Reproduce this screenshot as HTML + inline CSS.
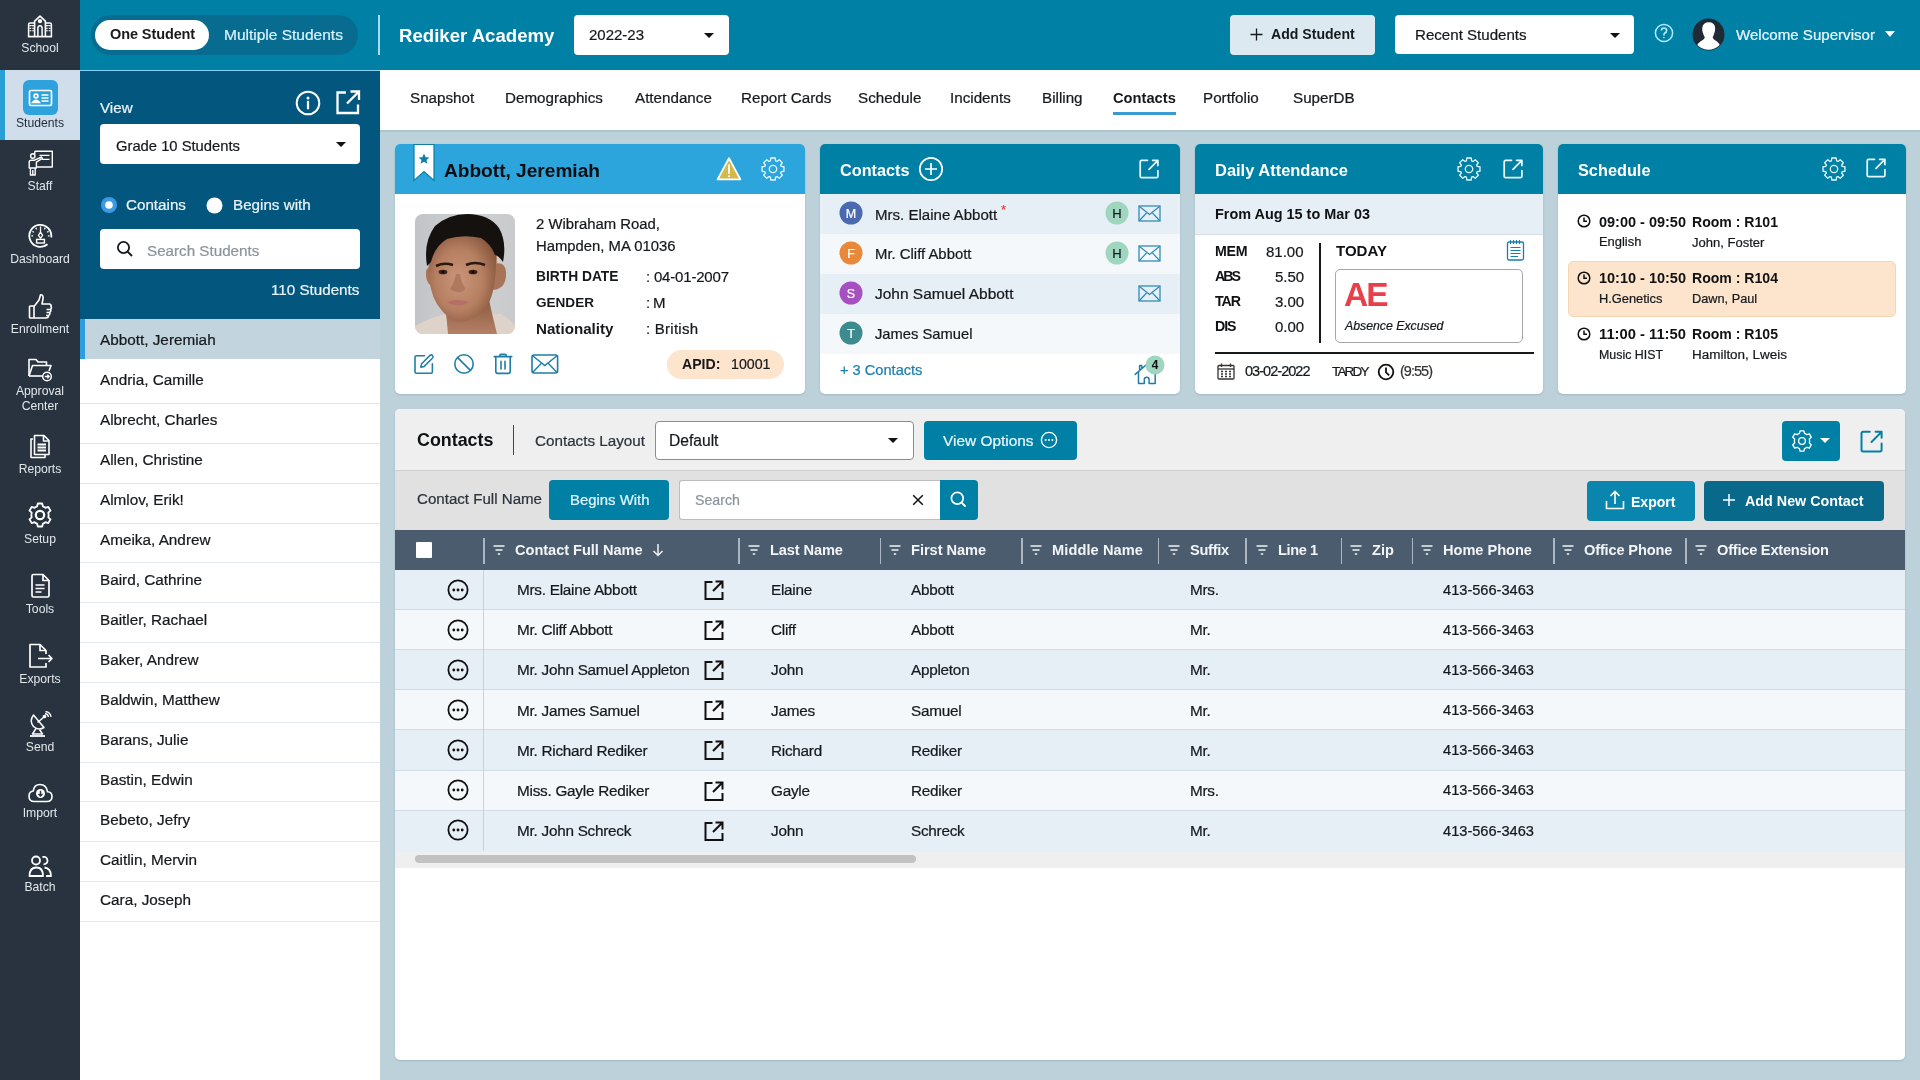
<!DOCTYPE html>
<html><head><meta charset="utf-8"><style>*{box-sizing:border-box;margin:0;padding:0}
html,body{width:1920px;height:1080px;overflow:hidden}
body{position:relative;background:#bdd1da;font-family:"Liberation Sans",sans-serif;color:#16191c}
.a{position:absolute}
.t{position:absolute;line-height:1;white-space:nowrap;will-change:transform}
svg{display:block}
.si{position:absolute;left:0;width:80px;text-align:center;color:#e2e7eb;font-size:12.2px;line-height:14px;will-change:transform}</style></head><body>
<div class="a" style="left:0;top:0;width:80px;height:1080px;background:#28333f">
  <!-- School -->
  <svg class="a" style="left:27px;top:14px" width="26" height="24" viewBox="0 0 26 24" fill="none" stroke="#fff" stroke-linejoin="round">
    <path d="M7.6 22.5 V7.2 L13 2.2 L18.4 7.2 V22.5" stroke-width="1.6"/>
    <circle cx="13" cy="7.2" r="2.1" fill="#fff" stroke="none"/>
    <path d="M10.9 22.5 V14.2 Q10.9 11.8 13 11.8 Q15.1 11.8 15.1 14.2 V22.5" stroke-width="1.5"/>
    <path d="M1.6 22 V10.5 Q1.6 9 3.2 9 H7.6 M18.4 9 H22.8 Q24.4 9 24.4 10.5 V22" stroke-width="1.5"/>
    <path d="M2.4 11.6 H7 M2.4 14.2 H7 M2.4 16.8 H7 M19 11.6 H23.6 M19 14.2 H23.6 M19 16.8 H23.6" stroke-width="1.1"/>
    <path d="M4.7 11.6 V19.5 M21.3 11.6 V19.5" stroke-width="0.8" stroke="#28333f"/>
    <path d="M0.8 22.6 H25.2" stroke-width="1.7"/>
  </svg>
  <div class="si" style="top:41px">School</div>
  <!-- Students active -->
  <div class="a" style="left:0;top:70px;width:80px;height:70px;background:#cfdeea"></div>
  <div class="a" style="left:0;top:70px;width:5px;height:70px;background:#2a9fd6"></div>
  <div class="a" style="left:23px;top:80px;width:35px;height:35px;background:#2ea2dc;border-radius:6px"></div>
  <svg class="a" style="left:28px;top:89px" width="25" height="18" viewBox="0 0 25 18" fill="none" stroke="#fff" stroke-width="1.7">
    <rect x="1.5" y="1.5" width="22" height="15" rx="1.5"/>
    <circle cx="8" cy="7" r="1.9"/><path d="M4.8 13.3 Q8 9.5 11.2 13.3 Z" fill="#fff"/>
    <path d="M13.5 6 H20.5 M13.5 9 H20.5 M13.5 12 H20.5" stroke-width="1.5"/>
  </svg>
  <div class="si" style="top:116px;color:#1f2a36">Students</div>
  <!-- Staff -->
  <svg class="a" style="left:28px;top:150px" width="26" height="26" viewBox="0 0 26 26" fill="none" stroke="#fff" stroke-width="1.4" stroke-linejoin="round">
    <path d="M6.8 1.2 H24.3 V17 H9"/><path d="M6.8 1.2 V4"/>
    <path d="M11.5 5.4 H21.5 M14 9.3 H21.5" stroke-width="1.3"/>
    <circle cx="4.8" cy="6" r="2.2"/>
    <path d="M1.2 18 V12.2 Q1.2 10.2 3.2 10.2 H6.6 L13.6 7 L14.3 8.4 L8.4 12.2 V18 Z"/>
    <path d="M2.4 18 V25 H4.8 V20 M4.8 25 H7.2 V18"/>
  </svg>
  <div class="si" style="top:179px">Staff</div>
  <!-- Dashboard -->
  <svg class="a" style="left:28px;top:223px" width="25" height="25" viewBox="0 0 25 25" fill="none" stroke="#fff" stroke-width="1.8">
    <path d="M19.5 21.2 A11 11 0 1 1 23.2 14.5"/>
    <path d="M12.5 3.6 V5.4 M7.8 4.9 L8.6 6.4 M17.2 4.9 L16.4 6.4 M4.4 8.4 L5.9 9.2 M20.6 8.4 L19.1 9.2 M3.4 12.8 H5.1 M21.6 12.8 H19.9" stroke-width="1.3"/>
    <path d="M12.5 5.2 V9" stroke-width="1.3"/>
    <path d="M12.5 9 L14.6 12.4 L12.5 15.2 L10.4 12.4 Z" stroke-width="1.3" stroke-linejoin="round"/>
    <rect x="8.6" y="16.4" width="7.8" height="3.6" stroke-width="1.4"/>
  </svg>
  <div class="si" style="top:252px">Dashboard</div>
  <!-- Enrollment -->
  <svg class="a" style="left:28px;top:293px" width="25" height="27" viewBox="0 0 25 27" fill="none" stroke="#fff" stroke-width="1.6" stroke-linejoin="round">
    <rect x="1.5" y="13" width="4.5" height="12" rx="0.8"/>
    <path d="M6 13.5 L11 7 Q12 4 12.5 1.8 Q15.5 1.5 15 6 L14 11 H21.5 Q23.5 11.5 23 13.5 Q24 15 22.5 16.5 Q23.5 18.5 21.5 19.5 Q22.5 21.5 20.5 22.5 Q20.5 25 18 25 H6"/>
    <path d="M18.5 16.5 H22.5 M18.5 19.5 H21.5 M18 22.5 H20.5" stroke-width="1.3"/>
  </svg>
  <div class="si" style="top:322px">Enrollment</div>
  <!-- Approval Center -->
  <svg class="a" style="left:27px;top:357px" width="27" height="25" viewBox="0 0 27 25" fill="none" stroke="#fff" stroke-width="1.6" stroke-linejoin="round">
    <path d="M2 19 V2.5 H9 L11 5 H19.5 V8"/>
    <path d="M2 19 L5.5 8.5 H24 L22 14"/>
    <path d="M2 19 H15"/>
    <circle cx="20" cy="19.5" r="4.3" stroke-width="1.5"/>
    <path d="M17.8 19.5 H22 M20.3 17.6 L22.2 19.5 L20.3 21.4" stroke-width="1.3"/>
  </svg>
  <div class="si" style="top:384px">Approval</div>
  <div class="si" style="top:399px">Center</div>
  <!-- Reports -->
  <svg class="a" style="left:29px;top:434px" width="22" height="25" viewBox="0 0 22 25" fill="none" stroke="#fff" stroke-width="1.6" stroke-linejoin="round">
    <path d="M4 5 H2 V23.5 H16 V21"/>
    <path d="M5.5 1.5 H15 L20 6.5 V20.5 H5.5 Z"/>
    <path d="M14.5 1.5 V7 H20"/>
    <path d="M8.5 10.5 H17 M8.5 13.5 H17 M8.5 16.5 H17" stroke-width="1.8"/>
  </svg>
  <div class="si" style="top:462px">Reports</div>
  <!-- Setup -->
  <svg class="a" style="left:27px;top:502px" width="26" height="26" viewBox="0 0 26 26" fill="none" stroke="#fff" stroke-width="1.8" stroke-linejoin="round">
    <path d="M11 1.8 H15 L15.6 5 L18.3 6.3 L21 4.5 L23.5 7.5 L21.4 10.2 L22.2 13 L25 14 V17 L21.7 17.8 L20.6 20.4 L22.3 23.2 L19.5 25.8 L16.7 23.9 L14.2 24.9 L13.5 28 " transform="translate(0 -2)" style="display:none"/>
    <g transform="translate(13 13)">
      <path d="M-2.2 -11.5 H2.2 L2.9 -8.6 A8.8 8.8 0 0 1 5.4 -7.2 L8.3 -8.1 L10.5 -4.3 L8.3 -2.3 A8.8 8.8 0 0 1 8.3 2.3 L10.5 4.3 L8.3 8.1 L5.4 7.2 A8.8 8.8 0 0 1 2.9 8.6 L2.2 11.5 H-2.2 L-2.9 8.6 A8.8 8.8 0 0 1 -5.4 7.2 L-8.3 8.1 L-10.5 4.3 L-8.3 2.3 A8.8 8.8 0 0 1 -8.3 -2.3 L-10.5 -4.3 L-8.3 -8.1 L-5.4 -7.2 A8.8 8.8 0 0 1 -2.9 -8.6 Z"/>
      <circle r="4.2" stroke-width="2.2"/>
    </g>
  </svg>
  <div class="si" style="top:532px">Setup</div>
  <!-- Tools -->
  <svg class="a" style="left:30px;top:573px" width="21" height="26" viewBox="0 0 21 26" fill="none" stroke="#fff" stroke-width="1.7" stroke-linejoin="round">
    <path d="M2 3 Q2 1.5 3.5 1.5 H13 L19 7.5 V22.5 Q19 24 17.5 24 H3.5 Q2 24 2 22.5 Z"/>
    <path d="M13 1.5 V7.5 H19"/>
    <path d="M5.5 12 H14.5 M5.5 15.5 H14.5 M5.5 19 H11.5" stroke-width="1.6"/>
  </svg>
  <div class="si" style="top:602px">Tools</div>
  <!-- Exports -->
  <svg class="a" style="left:28px;top:643px" width="26" height="26" viewBox="0 0 26 26" fill="none" stroke="#fff" stroke-width="1.7" stroke-linejoin="round">
    <path d="M18 11 V7.5 L12 1.5 H2 V24 H18 V20"/>
    <path d="M12 1.5 V7.5 H18"/>
    <path d="M10 15.5 H24 M20.5 12 L24 15.5 L20.5 19" stroke-width="1.6"/>
  </svg>
  <div class="si" style="top:672px">Exports</div>
  <!-- Send -->
  <svg class="a" style="left:28px;top:711px" width="25" height="27" viewBox="0 0 25 27" fill="none" stroke="#fff" stroke-width="1.5" stroke-linejoin="round">
    <path d="M5.5 4 Q1 10 5.5 15.5 Q10.5 20 16 16.5 Z"/>
    <path d="M9.5 11.5 L16 6" /><circle cx="16.5" cy="5.5" r="1.1" fill="#fff"/>
    <path d="M17 2.5 Q20 3 20.5 6 M17.5 0.5 Q22.5 1 23 6" stroke-width="1.3"/>
    <path d="M8 17.5 L4.5 23 H14.5 L11.5 18.5"/>
    <path d="M2 25 H17" stroke-width="1.8"/>
  </svg>
  <div class="si" style="top:740px">Send</div>
  <!-- Import -->
  <svg class="a" style="left:28px;top:783px" width="25" height="20" viewBox="0 0 25 20" fill="none" stroke="#fff" stroke-width="1.6" stroke-linejoin="round">
    <path d="M6.5 18.5 H19 Q24 18.5 24 13.5 Q24 9 19.5 8.8 Q18.5 1.5 12 1.5 Q6 1.5 5.3 8 Q1 8.5 1 13.2 Q1 18.5 6.5 18.5 Z"/>
    <circle cx="12.5" cy="10.5" r="4.5" fill="#fff" stroke="none"/>
    <path d="M12.5 7.8 V12.8 M10.5 11 L12.5 13 L14.5 11" stroke="#28333f" stroke-width="1.4"/>
  </svg>
  <div class="si" style="top:806px">Import</div>
  <!-- Batch -->
  <svg class="a" style="left:28px;top:855px" width="25" height="23" viewBox="0 0 25 23" fill="none" stroke="#fff" stroke-width="1.8" stroke-linejoin="round">
    <circle cx="8" cy="5.5" r="4"/>
    <path d="M14.5 2 Q19 1 19.5 5.5 Q19.5 9 15.5 9.3"/>
    <path d="M1.5 21 Q1.5 12.5 8.5 12.5 Q15 12.5 15 21 Z"/>
    <path d="M16.5 12.5 Q23 13.5 23 21 H18"/>
  </svg>
  <div class="si" style="top:880px">Batch</div>
</div>
<div class="a" style="left:80px;top:0;width:1840px;height:70px;background:#0180a5">
  <div class="a" style="left:11px;top:15px;width:267px;height:40px;background:#086c90;border-radius:20px"></div>
  <div class="a" style="left:15px;top:20px;width:114px;height:30px;background:#fff;border-radius:15px"></div>
  <div class="a" style="left:30px;top:26px;font-weight:bold;font-size:14.5px;line-height:17px;color:#1a1a1a;letter-spacing:-0.1px;will-change:transform">One Student</div>
  <div class="a" style="left:144px;top:26px;font-size:15.5px;line-height:17px;color:#d9f3ff;will-change:transform;-webkit-text-stroke:0.22px currentColor">Multiple Students</div>
  <div class="a" style="left:298px;top:15px;width:2px;height:40px;background:#9fe0f8"></div>
  <div class="a" style="left:319px;top:25px;font-weight:bold;font-size:18.6px;line-height:22px;color:#fff;will-change:transform">Rediker Academy</div>
  <div class="a" style="left:494px;top:15px;width:155px;height:40px;background:#fff;border-radius:4px"></div>
  <div class="a" style="left:509px;top:26px;font-size:15px;line-height:17px;color:#16191c;will-change:transform;-webkit-text-stroke:0.22px currentColor">2022-23</div>
  <div class="a" style="left:624px;top:33px;width:0;height:0;border-left:5px solid transparent;border-right:5px solid transparent;border-top:5px solid #111"></div>
  <div class="a" style="left:1150px;top:15px;width:145px;height:40px;background:#dce9f0;border-radius:4px"></div>
  <svg class="a" style="left:1170px;top:28px" width="13" height="13" viewBox="0 0 13 13"><path d="M6.5 0.5 V12.5 M0.5 6.5 H12.5" stroke="#16191c" stroke-width="1.3"/></svg>
  <div class="a" style="left:1191px;top:26px;font-weight:bold;font-size:14.1px;line-height:17px;color:#16191c;will-change:transform">Add Student</div>
  <div class="a" style="left:1315px;top:15px;width:239px;height:39px;background:#fff;border-radius:4px"></div>
  <div class="a" style="left:1335px;top:26px;font-size:15.1px;line-height:17px;color:#16191c;will-change:transform;-webkit-text-stroke:0.22px currentColor">Recent Students</div>
  <div class="a" style="left:1530px;top:33px;width:0;height:0;border-left:5px solid transparent;border-right:5px solid transparent;border-top:5px solid #111"></div>
  <svg class="a" style="left:1573px;top:23px" width="22" height="22" viewBox="0 0 22 22" fill="none" stroke="#aeeaff" stroke-width="1.5"><circle cx="11" cy="10" r="8.6"/><path d="M8.4 7.6 Q8.4 5 11 5 Q13.6 5 13.6 7.4 Q13.6 9.2 11.8 10.1 Q10.9 10.6 10.9 12.4" stroke-width="1.7"/><circle cx="10.9" cy="14.6" r="0.8" fill="#aeeaff" stroke="none"/></svg>
  <svg class="a" style="left:1612px;top:18px" width="33" height="33" viewBox="0 0 33 33"><circle cx="16.5" cy="16.5" r="16" fill="#1f2a35"/><clipPath id="avc"><circle cx="16.5" cy="16.5" r="15.3"/></clipPath><g clip-path="url(#avc)" fill="#fff"><path d="M16.8 4.3 Q22.6 4.3 23.1 9.8 Q23.3 13 22.3 15.2 Q21.5 17.6 20.6 19.6 Q21.2 21.6 25 23.4 Q27.6 25 28.2 29 L28.2 34 L4.8 34 L4.8 29 Q5.4 25 8.4 23.4 Q12.3 21.6 12.9 19.6 Q11.8 17.6 11 15.2 Q10 13 10.3 9.8 Q11 4.3 16.8 4.3 Z"/></g></svg>
  <div class="a" style="left:1656px;top:26px;font-size:15.1px;line-height:17px;color:#e8f7fd;will-change:transform;-webkit-text-stroke:0.22px currentColor">Welcome Supervisor</div>
  <div class="a" style="left:1805px;top:31px;width:0;height:0;border-left:5.5px solid transparent;border-right:5.5px solid transparent;border-top:6px solid #fff"></div>
</div>
<div class="a" style="left:80px;top:70px;width:300px;height:1010px;background:#fff;border-radius:0px;"></div>
<div class="a" style="left:80px;top:70px;width:300px;height:249px;background:#03577f;border-radius:0px;"></div>
<div class="a" style="left:80px;top:70px;width:300px;height:1px;background:#86d3f2;border-radius:0px;"></div>
<div class="t" style="left:100px;top:99.63px;font-size:15.2px;color:#eaf4f9;-webkit-text-stroke:0.22px currentColor;">View</div>
<svg class="a" style="left:295px;top:90px;" width="26" height="26" viewBox="0 0 26 26"><circle cx="13" cy="13" r="11.3" fill="none" stroke="#fff" stroke-width="2"/><circle cx="13" cy="8" r="1.5" fill="#fff"/><rect x="11.9" y="10.8" width="2.2" height="8.5" fill="#fff"/></svg>
<svg class="a" style="left:335px;top:89px;" width="26" height="27" viewBox="0 0 26 27"><path d="M11 3.5 H2.5 V24 H23 V15.5" fill="none" stroke="#fff" stroke-width="2.3"/><path d="M12 14.5 L23 3.5 M15.5 2.5 H24 V11" fill="none" stroke="#fff" stroke-width="2.3"/></svg>
<div class="a" style="left:100px;top:124px;width:260px;height:40px;background:#fff;border-radius:4px;"></div>
<div class="t" style="left:115.5px;top:138.50px;font-size:14.77px;color:#16191c;-webkit-text-stroke:0.22px currentColor;">Grade 10 Students</div>
<div class="a" style="left:336px;top:142px;width:0px;height:0px;background:transparent;border-radius:0px;border-left:5px solid transparent;border-right:5px solid transparent;border-top:5px solid #111;"></div>
<svg class="a" style="left:100px;top:196px;" width="18" height="18" viewBox="0 0 18 18"><circle cx="9" cy="9" r="8" fill="#3a9be4"/><circle cx="9" cy="9" r="3.8" fill="#fff"/></svg>
<div class="t" style="left:126px;top:196.93px;font-size:15.2px;color:#eaf4f9;-webkit-text-stroke:0.22px currentColor;">Contains</div>
<svg class="a" style="left:206px;top:197px;" width="17" height="17" viewBox="0 0 17 17"><circle cx="8.5" cy="8.5" r="8" fill="#fff"/></svg>
<div class="t" style="left:232.5px;top:196.93px;font-size:15.2px;color:#eaf4f9;-webkit-text-stroke:0.22px currentColor;">Begins with</div>
<div class="a" style="left:100px;top:229px;width:260px;height:40px;background:#fff;border-radius:4px;"></div>
<svg class="a" style="left:116px;top:240px;" width="18" height="18" viewBox="0 0 18 18"><circle cx="7.5" cy="7.5" r="5.6" fill="none" stroke="#16191c" stroke-width="1.8"/><path d="M11.6 11.6 L16 16" stroke="#16191c" stroke-width="2"/></svg>
<div class="t" style="left:147px;top:242.63px;font-size:15.2px;color:#8b949c;-webkit-text-stroke:0.22px currentColor;">Search Students</div>
<div class="t" style="right:1561px;top:282.13px;font-size:15.2px;color:#eaf4f9;-webkit-text-stroke:0.22px currentColor;">110 Students</div>
<div class="a" style="left:80px;top:319px;width:300px;height:40px;background:#c2d4de;border-radius:0px;"></div>
<div class="a" style="left:80px;top:319px;width:5px;height:40px;background:#2c9ee0;border-radius:0px;"></div>
<div class="a" style="left:80px;top:403px;width:300px;height:1px;background:#e2e8ef;border-radius:0px;"></div>
<div class="a" style="left:80px;top:443px;width:300px;height:1px;background:#e2e8ef;border-radius:0px;"></div>
<div class="a" style="left:80px;top:483px;width:300px;height:1px;background:#e2e8ef;border-radius:0px;"></div>
<div class="a" style="left:80px;top:523px;width:300px;height:1px;background:#e2e8ef;border-radius:0px;"></div>
<div class="a" style="left:80px;top:562px;width:300px;height:1px;background:#e2e8ef;border-radius:0px;"></div>
<div class="a" style="left:80px;top:602px;width:300px;height:1px;background:#e2e8ef;border-radius:0px;"></div>
<div class="a" style="left:80px;top:642px;width:300px;height:1px;background:#e2e8ef;border-radius:0px;"></div>
<div class="a" style="left:80px;top:682px;width:300px;height:1px;background:#e2e8ef;border-radius:0px;"></div>
<div class="a" style="left:80px;top:722px;width:300px;height:1px;background:#e2e8ef;border-radius:0px;"></div>
<div class="a" style="left:80px;top:762px;width:300px;height:1px;background:#e2e8ef;border-radius:0px;"></div>
<div class="a" style="left:80px;top:801px;width:300px;height:1px;background:#e2e8ef;border-radius:0px;"></div>
<div class="a" style="left:80px;top:841px;width:300px;height:1px;background:#e2e8ef;border-radius:0px;"></div>
<div class="a" style="left:80px;top:881px;width:300px;height:1px;background:#e2e8ef;border-radius:0px;"></div>
<div class="a" style="left:80px;top:921px;width:300px;height:1px;background:#e2e8ef;border-radius:0px;"></div>
<div class="t" style="left:100px;top:332.05px;font-size:15.3px;color:#16191c;-webkit-text-stroke:0.22px currentColor;">Abbott, Jeremiah</div>
<div class="t" style="left:100px;top:372.05px;font-size:15.3px;color:#16191c;-webkit-text-stroke:0.22px currentColor;">Andria, Camille</div>
<div class="t" style="left:100px;top:412.05px;font-size:15.3px;color:#16191c;-webkit-text-stroke:0.22px currentColor;">Albrecht, Charles</div>
<div class="t" style="left:100px;top:452.05px;font-size:15.3px;color:#16191c;-webkit-text-stroke:0.22px currentColor;">Allen, Christine</div>
<div class="t" style="left:100px;top:492.05px;font-size:15.3px;color:#16191c;-webkit-text-stroke:0.22px currentColor;">Almlov, Erik!</div>
<div class="t" style="left:100px;top:532.05px;font-size:15.3px;color:#16191c;-webkit-text-stroke:0.22px currentColor;">Ameika, Andrew</div>
<div class="t" style="left:100px;top:572.05px;font-size:15.3px;color:#16191c;-webkit-text-stroke:0.22px currentColor;">Baird, Cathrine</div>
<div class="t" style="left:100px;top:612.05px;font-size:15.3px;color:#16191c;-webkit-text-stroke:0.22px currentColor;">Baitler, Rachael</div>
<div class="t" style="left:100px;top:652.05px;font-size:15.3px;color:#16191c;-webkit-text-stroke:0.22px currentColor;">Baker, Andrew</div>
<div class="t" style="left:100px;top:692.05px;font-size:15.3px;color:#16191c;-webkit-text-stroke:0.22px currentColor;">Baldwin, Matthew</div>
<div class="t" style="left:100px;top:732.05px;font-size:15.3px;color:#16191c;-webkit-text-stroke:0.22px currentColor;">Barans, Julie</div>
<div class="t" style="left:100px;top:772.05px;font-size:15.3px;color:#16191c;-webkit-text-stroke:0.22px currentColor;">Bastin, Edwin</div>
<div class="t" style="left:100px;top:812.05px;font-size:15.3px;color:#16191c;-webkit-text-stroke:0.22px currentColor;">Bebeto, Jefry</div>
<div class="t" style="left:100px;top:852.05px;font-size:15.3px;color:#16191c;-webkit-text-stroke:0.22px currentColor;">Caitlin, Mervin</div>
<div class="t" style="left:100px;top:892.05px;font-size:15.3px;color:#16191c;-webkit-text-stroke:0.22px currentColor;">Cara, Joseph</div>
<div class="a" style="left:380px;top:70px;width:1540px;height:60px;background:#fff;border-radius:0px;"></div>
<div class="a" style="left:380px;top:130px;width:1540px;height:2px;background:rgba(0,40,60,0.07);border-radius:0px;"></div>
<div class="t" style="left:410px;top:90.13px;font-size:15.2px;color:#16191c;-webkit-text-stroke:0.22px currentColor;">Snapshot</div>
<div class="t" style="left:505px;top:90.13px;font-size:15.2px;color:#16191c;-webkit-text-stroke:0.22px currentColor;">Demographics</div>
<div class="t" style="left:635px;top:90.13px;font-size:15.2px;color:#16191c;-webkit-text-stroke:0.22px currentColor;">Attendance</div>
<div class="t" style="left:741px;top:90.13px;font-size:15.2px;color:#16191c;-webkit-text-stroke:0.22px currentColor;">Report Cards</div>
<div class="t" style="left:858px;top:90.13px;font-size:15.2px;color:#16191c;-webkit-text-stroke:0.22px currentColor;">Schedule</div>
<div class="t" style="left:950px;top:90.13px;font-size:15.2px;color:#16191c;-webkit-text-stroke:0.22px currentColor;">Incidents</div>
<div class="t" style="left:1042px;top:90.13px;font-size:15.2px;color:#16191c;-webkit-text-stroke:0.22px currentColor;">Billing</div>
<div class="t" style="left:1113px;top:90.56px;font-size:14.7px;color:#16191c;font-weight:bold;">Contacts</div>
<div class="t" style="left:1203px;top:90.13px;font-size:15.2px;color:#16191c;-webkit-text-stroke:0.22px currentColor;">Portfolio</div>
<div class="t" style="left:1293px;top:90.13px;font-size:15.2px;color:#16191c;-webkit-text-stroke:0.22px currentColor;">SuperDB</div>
<div class="a" style="left:1113px;top:112px;width:63px;height:3px;background:#3a9bd2;border-radius:0px;"></div>
<div class="a" style="left:395px;top:144px;width:410px;height:250px;background:#fff;border-radius:5px;box-shadow:0 1px 2px rgba(40,60,80,.18);"></div>
<div class="a" style="left:395px;top:144px;width:410px;height:50px;background:#2ca5dc;border-radius:0px;border-radius:5px 5px 0 0;"></div>
<svg class="a" style="left:413px;top:144px;" width="22" height="38" viewBox="0 0 22 38"><path d="M1 0.5 H21 V36.5 L11 27.5 L1 36.5 Z" fill="#fff" stroke="#0d7fa5" stroke-width="1.2"/><path d="M11 9.5 L12.6 13.2 L16.4 13.5 L13.5 16 L14.4 19.8 L11 17.8 L7.6 19.8 L8.5 16 L5.6 13.5 L9.4 13.2 Z" fill="#0d7fa5"/></svg>
<div class="t" style="left:444.4px;top:160.83px;font-size:19.1px;color:#0b0d10;font-weight:bold;">Abbott, Jeremiah</div>
<svg class="a" style="left:716px;top:156px;" width="26" height="26" viewBox="0 0 26 26"><path d="M13 2.2 L24.4 23.4 H1.6 Z" fill="#d4b84a" stroke="#fff" stroke-width="1.8" stroke-linejoin="round"/><path d="M13 9 V17.2" stroke="#fff" stroke-width="1.7" stroke-linecap="round"/><circle cx="13" cy="20.2" r="1" fill="#fff"/></svg>
<svg class="a" style="left:760px;top:156px;" width="26" height="26" viewBox="0 0 26 26"><path d="M10.46 4.78 L10.77 2.02 L15.23 2.02 L15.54 4.78 A8.6 8.6 0 0 1 17.01 5.39 L19.19 3.66 L22.34 6.81 L20.61 8.99 A8.6 8.6 0 0 1 21.22 10.46 L23.98 10.77 L23.98 15.23 L21.22 15.54 A8.6 8.6 0 0 1 20.61 17.01 L22.34 19.19 L19.19 22.34 L17.01 20.61 A8.6 8.6 0 0 1 15.54 21.22 L15.23 23.98 L10.77 23.98 L10.46 21.22 A8.6 8.6 0 0 1 8.99 20.61 L6.81 22.34 L3.66 19.19 L5.39 17.01 A8.6 8.6 0 0 1 4.78 15.54 L2.02 15.23 L2.02 10.77 L4.78 10.46 A8.6 8.6 0 0 1 5.39 8.99 L3.66 6.81 L6.81 3.66 L8.99 5.39 A8.6 8.6 0 0 1 10.46 4.78 Z" fill="none" stroke="#e6f8ff" stroke-width="1.3" stroke-linejoin="round"/><circle cx="13" cy="13" r="3.7" fill="none" stroke="#e6f8ff" stroke-width="1.3"/></svg>
<div class="a" style="left:415px;top:214px;width:100px;height:120px;border-radius:8px;overflow:hidden;background:linear-gradient(90deg,#c2c3c6,#d0d1d3 50%,#c9cacc)">
<svg width="100" height="120" viewBox="0 0 100 120">
<defs><radialGradient id="sk" cx="45%" cy="52%" r="58%"><stop offset="0" stop-color="#c99578"/><stop offset="0.6" stop-color="#b67f62"/><stop offset="1" stop-color="#8a5a40"/></radialGradient>
<linearGradient id="nk" x1="0" y1="0" x2="0" y2="1"><stop offset="0" stop-color="#8c5b42"/><stop offset="1" stop-color="#b58066"/></linearGradient></defs>
<path d="M0 120 L0 112 Q14 104 30 100 L86 100 Q96 106 100 112 L100 120 Z" fill="#ddd3c9"/>
<path d="M30 92 Q32 106 33 120 L82 120 Q78 104 74 86 Z" fill="url(#nk)"/>
<path d="M78 50 Q92 46 91 62 Q90 76 76 76 Z" fill="#a87458"/>
<path d="M16 52 Q10 54 11 62 Q12 70 17 72 Z" fill="#a87458"/>
<path d="M16 40 Q20 20 48 18 Q78 18 82 44 L82 50 L14 50 Z" fill="#b67f62"/>
<path d="M14 44 Q12 74 22 90 Q34 108 46 108 Q62 106 72 92 Q81 78 81 46 Q84 22 46 20 Q16 22 14 44 Z" fill="url(#sk)"/>
<path d="M12 52 Q8 28 20 12 Q34 0 52 0 Q74 0 84 14 Q92 28 88 48 Q84 42 80 41 Q76 30 66 24 Q48 20 32 25 Q20 32 16 48 Z" fill="#15110e"/>
<path d="M21 52 Q29 48 38 51" stroke="#2a1b12" stroke-width="2.6" fill="none"/><path d="M51 51 Q60 47 70 51" stroke="#2a1b12" stroke-width="2.6" fill="none"/>
<ellipse cx="28" cy="58" rx="4.4" ry="2.3" fill="#3a2418"/><ellipse cx="58" cy="58" rx="4.4" ry="2.3" fill="#3a2418"/>
<circle cx="28" cy="58" r="1.6" fill="#120b07"/><circle cx="58" cy="58" r="1.6" fill="#120b07"/>
<path d="M41 60 Q39 70 35 75 Q40 79 46 78 Q50 77 50 74 Q46 68 45 60" fill="#a8735a" opacity="0.8"/>
<path d="M32 88 Q42 84 54 88 Q44 95 32 88 Z" fill="#b56f66"/>
</svg></div>
<div class="t" style="left:535.6px;top:217.21px;font-size:14.87px;color:#16191c;-webkit-text-stroke:0.22px currentColor;">2 Wibraham Road,</div>
<div class="t" style="left:535.6px;top:239.03px;font-size:14.85px;color:#16191c;-webkit-text-stroke:0.22px currentColor;">Hampden, MA 01036</div>
<div class="t" style="left:535.6px;top:270.33px;font-size:13.79px;color:#16191c;font-weight:bold;">BIRTH DATE</div>
<div class="t" style="left:535.6px;top:296.22px;font-size:13.56px;color:#16191c;font-weight:bold;">GENDER</div>
<div class="t" style="left:535.6px;top:320.87px;font-size:15.16px;color:#16191c;font-weight:bold;">Nationality</div>
<div class="t" style="left:646px;top:269.30px;font-size:15px;color:#16191c;-webkit-text-stroke:0.22px currentColor;letter-spacing:-0.187px;">: 04-01-2007</div>
<div class="t" style="left:646px;top:295.00px;font-size:15px;color:#16191c;-webkit-text-stroke:0.22px currentColor;letter-spacing:-0.664px;">: M</div>
<div class="t" style="left:646px;top:321.00px;font-size:15px;color:#16191c;-webkit-text-stroke:0.22px currentColor;letter-spacing:0.249px;">: British</div>
<svg class="a" style="left:413px;top:353px;" width="22" height="22" viewBox="0 0 22 22"><path d="M11.5 2.8 H3.4 Q2 2.8 2 4.2 V18.8 Q2 20.2 3.4 20.2 H18 Q19.4 20.2 19.4 18.8 V10.8" fill="none" stroke="#1f7ea5" stroke-width="1.6" stroke-linecap="round"/><path d="M7.8 14.2 L8.6 10.8 L17 2.4 Q18.3 1.3 19.5 2.5 Q20.6 3.8 19.6 5 L11.2 13.4 Z" fill="none" stroke="#1f7ea5" stroke-width="1.5" stroke-linejoin="round"/></svg>
<svg class="a" style="left:453px;top:353px;" width="22" height="22" viewBox="0 0 22 22"><circle cx="11" cy="11" r="9.2" fill="none" stroke="#1f7ea5" stroke-width="1.6"/><path d="M4.6 4.6 L17.4 17.4" stroke="#1f7ea5" stroke-width="1.6"/></svg>
<svg class="a" style="left:493px;top:353px;" width="20" height="22" viewBox="0 0 20 22"><path d="M1.2 3.6 H18.8 M6.8 3.6 V2.6 Q6.8 1.4 8 1.4 H12 Q13.2 1.4 13.2 2.6 V3.6 M2.8 4 V18.6 Q2.8 20.4 4.6 20.4 H15.4 Q17.2 20.4 17.2 18.6 V4 M8 8.2 V16 M12 8.2 V16" fill="none" stroke="#1f7ea5" stroke-width="1.6" stroke-linejoin="round" stroke-linecap="round"/></svg>
<svg class="a" style="left:531px;top:354px;" width="28" height="20" viewBox="0 0 28 20"><rect x="1" y="1" width="25.6" height="18" rx="2" fill="none" stroke="#1f7ea5" stroke-width="1.6"/><path d="M1.6 1.8 L13.8 11.6 L26 1.8 M1.6 18.4 L10.6 9 M26 18.4 L17 9" fill="none" stroke="#1f7ea5" stroke-width="1.4"/></svg>
<div class="a" style="left:667px;top:349.5px;width:117px;height:29px;background:#fde4cc;border-radius:14.5px;"></div>
<div class="t" style="left:682px;top:356.83px;font-size:14.14px;color:#16191c;font-weight:bold;">APID:</div>
<div class="t" style="left:730.7px;top:356.97px;font-size:14.21px;color:#16191c;-webkit-text-stroke:0.22px currentColor;">10001</div>
<div class="a" style="left:820px;top:144px;width:360px;height:250px;background:#fff;border-radius:5px;box-shadow:0 1px 2px rgba(40,60,80,.18);"></div>
<div class="a" style="left:820px;top:144px;width:360px;height:50px;background:#0180a5;border-radius:0px;border-radius:5px 5px 0 0;"></div>
<div class="t" style="left:840.3px;top:162.04px;font-size:16.25px;color:#fff;font-weight:bold;">Contacts</div>
<svg class="a" style="left:918px;top:156px;" width="26" height="26" viewBox="0 0 26 26"><circle cx="13" cy="13" r="11.2" fill="none" stroke="#fff" stroke-width="1.7"/><path d="M13 7 V19 M7 13 H19" stroke="#fff" stroke-width="1.7"/></svg>
<svg class="a" style="left:1138px;top:157px;" width="22" height="22" viewBox="0 0 22 22"><path d="M9.5 3.3 H3.7 Q2.2 3.3 2.2 4.8 V19.2 Q2.2 20.7 3.7 20.7 H18.4 Q19.9 20.7 19.9 19.2 V13.7" fill="none" stroke="#e6f8ff" stroke-width="1.75" stroke-linecap="round"/><path d="M11 12.3 L19.9 3.4 M14.6 3.3 H19.9 V8.6" fill="none" stroke="#e6f8ff" stroke-width="1.75" stroke-linecap="round" stroke-linejoin="round"/></svg>
<div class="a" style="left:820px;top:194px;width:360px;height:40px;background:#e6eef6;border-radius:0px;"></div>
<svg class="a" style="left:839px;top:201px;" width="24" height="24" viewBox="0 0 24 24"><circle cx="12" cy="12" r="11.5" fill="#4a69b0"/></svg>
<div class="t" style="left:851px;top:207.72px;font-size:12.5px;color:#fff;-webkit-text-stroke:0.22px currentColor;transform:translateX(-50%);">M</div>
<div class="t" style="left:874.8px;top:206.75px;font-size:15.06px;color:#16191c;-webkit-text-stroke:0.22px currentColor;">Mrs. Elaine Abbott</div>
<svg class="a" style="left:1138px;top:205px;" width="23" height="17" viewBox="0 0 23 17"><rect x="1" y="1" width="21" height="15" fill="none" stroke="#2a88b4" stroke-width="1.25"/><path d="M1.5 1.5 L11.5 9.5 L21.5 1.5 M1.5 15.5 L8.5 8 M21.5 15.5 L14.5 8" fill="none" stroke="#2a88b4" stroke-width="1.1"/></svg>
<svg class="a" style="left:1105px;top:201px;" width="24" height="24" viewBox="0 0 24 24"><circle cx="12" cy="12" r="11.5" fill="#9fd6bf"/></svg>
<div class="t" style="left:1117px;top:207.30px;font-size:13px;color:#16191c;-webkit-text-stroke:0.22px currentColor;transform:translateX(-50%);">H</div>
<div class="a" style="left:820px;top:234px;width:360px;height:40px;background:#f4f8fb;border-radius:0px;"></div>
<svg class="a" style="left:839px;top:241px;" width="24" height="24" viewBox="0 0 24 24"><circle cx="12" cy="12" r="11.5" fill="#e8883a"/></svg>
<div class="t" style="left:851px;top:247.72px;font-size:12.5px;color:#fff;-webkit-text-stroke:0.22px currentColor;transform:translateX(-50%);">F</div>
<div class="t" style="left:874.8px;top:246.90px;font-size:14.88px;color:#16191c;-webkit-text-stroke:0.22px currentColor;">Mr. Cliff Abbott</div>
<svg class="a" style="left:1138px;top:245px;" width="23" height="17" viewBox="0 0 23 17"><rect x="1" y="1" width="21" height="15" fill="none" stroke="#2a88b4" stroke-width="1.25"/><path d="M1.5 1.5 L11.5 9.5 L21.5 1.5 M1.5 15.5 L8.5 8 M21.5 15.5 L14.5 8" fill="none" stroke="#2a88b4" stroke-width="1.1"/></svg>
<svg class="a" style="left:1105px;top:241px;" width="24" height="24" viewBox="0 0 24 24"><circle cx="12" cy="12" r="11.5" fill="#9fd6bf"/></svg>
<div class="t" style="left:1117px;top:247.30px;font-size:13px;color:#16191c;-webkit-text-stroke:0.22px currentColor;transform:translateX(-50%);">H</div>
<div class="a" style="left:820px;top:274px;width:360px;height:40px;background:#e6eef6;border-radius:0px;"></div>
<svg class="a" style="left:839px;top:281px;" width="24" height="24" viewBox="0 0 24 24"><circle cx="12" cy="12" r="11.5" fill="#a64fc0"/></svg>
<div class="t" style="left:851px;top:287.72px;font-size:12.5px;color:#fff;-webkit-text-stroke:0.22px currentColor;transform:translateX(-50%);">S</div>
<div class="t" style="left:874.8px;top:286.40px;font-size:15.47px;color:#16191c;-webkit-text-stroke:0.22px currentColor;">John Samuel Abbott</div>
<svg class="a" style="left:1138px;top:285px;" width="23" height="17" viewBox="0 0 23 17"><rect x="1" y="1" width="21" height="15" fill="none" stroke="#2a88b4" stroke-width="1.25"/><path d="M1.5 1.5 L11.5 9.5 L21.5 1.5 M1.5 15.5 L8.5 8 M21.5 15.5 L14.5 8" fill="none" stroke="#2a88b4" stroke-width="1.1"/></svg>
<div class="a" style="left:820px;top:314px;width:360px;height:40px;background:#f4f8fb;border-radius:0px;"></div>
<svg class="a" style="left:839px;top:321px;" width="24" height="24" viewBox="0 0 24 24"><circle cx="12" cy="12" r="11.5" fill="#3d8b8f"/></svg>
<div class="t" style="left:851px;top:327.72px;font-size:12.5px;color:#fff;-webkit-text-stroke:0.22px currentColor;transform:translateX(-50%);">T</div>
<div class="t" style="left:874.8px;top:327.02px;font-size:14.74px;color:#16191c;-webkit-text-stroke:0.22px currentColor;">James Samuel</div>
<div class="t" style="left:1001px;top:203.00px;font-size:13px;color:#e0443e;-webkit-text-stroke:0.22px currentColor;">*</div>
<div class="t" style="left:840.3px;top:362.82px;font-size:14.62px;color:#1a7fae;-webkit-text-stroke:0.22px currentColor;">+ 3 Contacts</div>
<svg class="a" style="left:1134px;top:362px;" width="26" height="24" viewBox="0 0 26 24"><path d="M1.2 12.4 L12 3 M5.6 7.6 V3.6 H7.8 V5.7 M4.5 10.2 V21.4 H10.3 V17.6 Q10.3 15.3 12.7 15.3 Q15.1 15.3 15.1 17.6 V21.4 H21.2 V12" fill="none" stroke="#1f7ea8" stroke-width="1.5" stroke-linejoin="round" stroke-linecap="round"/></svg>
<svg class="a" style="left:1145px;top:355px;" width="20" height="20" viewBox="0 0 20 20"><circle cx="10" cy="10" r="9.5" fill="#9fd6bf"/></svg>
<div class="t" style="left:1155px;top:358.92px;font-size:12.5px;color:#111;font-weight:bold;transform:translateX(-50%);">4</div>
<div class="a" style="left:1195px;top:144px;width:348px;height:250px;background:#fff;border-radius:5px;box-shadow:0 1px 2px rgba(40,60,80,.18);"></div>
<div class="a" style="left:1195px;top:144px;width:348px;height:50px;background:#0180a5;border-radius:0px;border-radius:5px 5px 0 0;"></div>
<div class="t" style="left:1215.3px;top:161.86px;font-size:16.47px;color:#fff;font-weight:bold;">Daily Attendance</div>
<svg class="a" style="left:1456px;top:156px;" width="26" height="26" viewBox="0 0 26 26"><path d="M10.46 4.78 L10.77 2.02 L15.23 2.02 L15.54 4.78 A8.6 8.6 0 0 1 17.01 5.39 L19.19 3.66 L22.34 6.81 L20.61 8.99 A8.6 8.6 0 0 1 21.22 10.46 L23.98 10.77 L23.98 15.23 L21.22 15.54 A8.6 8.6 0 0 1 20.61 17.01 L22.34 19.19 L19.19 22.34 L17.01 20.61 A8.6 8.6 0 0 1 15.54 21.22 L15.23 23.98 L10.77 23.98 L10.46 21.22 A8.6 8.6 0 0 1 8.99 20.61 L6.81 22.34 L3.66 19.19 L5.39 17.01 A8.6 8.6 0 0 1 4.78 15.54 L2.02 15.23 L2.02 10.77 L4.78 10.46 A8.6 8.6 0 0 1 5.39 8.99 L3.66 6.81 L6.81 3.66 L8.99 5.39 A8.6 8.6 0 0 1 10.46 4.78 Z" fill="none" stroke="#e6f8ff" stroke-width="1.3" stroke-linejoin="round"/><circle cx="13" cy="13" r="3.7" fill="none" stroke="#e6f8ff" stroke-width="1.3"/></svg>
<svg class="a" style="left:1502px;top:157px;" width="22" height="22" viewBox="0 0 22 22"><path d="M9.5 3.3 H3.7 Q2.2 3.3 2.2 4.8 V19.2 Q2.2 20.7 3.7 20.7 H18.4 Q19.9 20.7 19.9 19.2 V13.7" fill="none" stroke="#e6f8ff" stroke-width="1.75" stroke-linecap="round"/><path d="M11 12.3 L19.9 3.4 M14.6 3.3 H19.9 V8.6" fill="none" stroke="#e6f8ff" stroke-width="1.75" stroke-linecap="round" stroke-linejoin="round"/></svg>
<div class="a" style="left:1195px;top:194px;width:348px;height:40px;background:#e6eef6;border-radius:0px;"></div>
<div class="a" style="left:1195px;top:233.5px;width:348px;height:1px;background:#d5dee6;border-radius:0px;"></div>
<div class="t" style="left:1215.3px;top:206.99px;font-size:14.43px;color:#0f1113;font-weight:bold;">From Aug 15 to Mar 03</div>
<div class="t" style="left:1215.3px;top:244.18px;font-size:14.2px;color:#0f1113;font-weight:bold;letter-spacing:-0.314px;">MEM</div>
<div class="t" style="right:616px;top:243.50px;font-size:15px;color:#16191c;-webkit-text-stroke:0.22px currentColor;">81.00</div>
<div class="t" style="left:1215.3px;top:269.18px;font-size:14.2px;color:#0f1113;font-weight:bold;letter-spacing:-1.991px;">ABS</div>
<div class="t" style="right:616px;top:268.50px;font-size:15px;color:#16191c;-webkit-text-stroke:0.22px currentColor;">5.50</div>
<div class="t" style="left:1215.3px;top:294.18px;font-size:14.2px;color:#0f1113;font-weight:bold;letter-spacing:-1.065px;">TAR</div>
<div class="t" style="right:616px;top:293.50px;font-size:15px;color:#16191c;-webkit-text-stroke:0.22px currentColor;">3.00</div>
<div class="t" style="left:1215.3px;top:319.18px;font-size:14.2px;color:#0f1113;font-weight:bold;letter-spacing:-1.086px;">DIS</div>
<div class="t" style="right:616px;top:318.50px;font-size:15px;color:#16191c;-webkit-text-stroke:0.22px currentColor;">0.00</div>
<div class="a" style="left:1319px;top:243px;width:2px;height:100px;background:#16191c;border-radius:0px;"></div>
<div class="t" style="left:1335.7px;top:243.47px;font-size:15.04px;color:#0f1113;font-weight:bold;">TODAY</div>
<svg class="a" style="left:1506px;top:239px;" width="19" height="22" viewBox="0 0 19 22"><rect x="1.5" y="3" width="16" height="18" rx="1.5" fill="none" stroke="#1a7fae" stroke-width="1.3"/><path d="M4.5 1 V5 M7.5 1 V5 M10.5 1 V5 M13.5 1 V5 M4.5 8.5 H14.5 M4.5 11.5 H14.5 M4.5 14.5 H14.5 M4.5 17.5 H12" stroke="#1a7fae" stroke-width="1.1"/></svg>
<div class="a" style="left:1335px;top:269px;width:188px;height:74px;background:#fff;border-radius:5px;border:1px solid #a7a7a7;"></div>
<div class="t" style="left:1344px;top:278.44px;font-size:33.5px;color:#e8404a;font-weight:bold;letter-spacing:-2.039px;">AE</div>
<div class="t" style="left:1344.8px;top:319.88px;font-size:12.31px;color:#16191c;-webkit-text-stroke:0.22px currentColor;font-style:italic;">Absence Excused</div>
<div class="a" style="left:1215px;top:351.5px;width:319px;height:2px;background:#16191c;border-radius:0px;"></div>
<svg class="a" style="left:1217px;top:363px;" width="18" height="17" viewBox="0 0 18 17"><rect x="1" y="2.5" width="16" height="13.5" rx="1" fill="none" stroke="#333" stroke-width="1.3"/><path d="M1 6 H17" stroke="#333" stroke-width="1.3"/><path d="M4.5 0.5 V4 M13.5 0.5 V4" stroke="#333" stroke-width="1.3"/><path d="M4 8.5 H6 M8 8.5 H10 M12 8.5 H14 M4 11 H6 M8 11 H10 M12 11 H14 M4 13.5 H6 M8 13.5 H10 M12 13.5 H14" stroke="#333" stroke-width="1.3"/></svg>
<div class="t" style="left:1245px;top:364.03px;font-size:14.5px;color:#16191c;-webkit-text-stroke:0.22px currentColor;letter-spacing:-0.963px;">03-02-2022</div>
<div class="t" style="left:1331.6px;top:364.87px;font-size:13.5px;color:#16191c;-webkit-text-stroke:0.22px currentColor;letter-spacing:-1.813px;">TARDY</div>
<svg class="a" style="left:1377px;top:363px;" width="18" height="18" viewBox="0 0 18 18"><circle cx="9" cy="9" r="7.3" fill="none" stroke="#111" stroke-width="1.8"/><path d="M9 4.5 V9.3 L12.2 12.3" fill="none" stroke="#111" stroke-width="1.8"/></svg>
<div class="t" style="left:1399.5px;top:364.03px;font-size:14.5px;color:#333;-webkit-text-stroke:0.22px currentColor;letter-spacing:-0.975px;">(9:55)</div>
<div class="a" style="left:1558px;top:144px;width:348px;height:250px;background:#fff;border-radius:5px;box-shadow:0 1px 2px rgba(40,60,80,.18);"></div>
<div class="a" style="left:1558px;top:144px;width:348px;height:50px;background:#0180a5;border-radius:0px;border-radius:5px 5px 0 0;"></div>
<div class="t" style="left:1578.4px;top:161.99px;font-size:16.31px;color:#fff;font-weight:bold;">Schedule</div>
<svg class="a" style="left:1821px;top:156px;" width="26" height="26" viewBox="0 0 26 26"><path d="M10.46 4.78 L10.77 2.02 L15.23 2.02 L15.54 4.78 A8.6 8.6 0 0 1 17.01 5.39 L19.19 3.66 L22.34 6.81 L20.61 8.99 A8.6 8.6 0 0 1 21.22 10.46 L23.98 10.77 L23.98 15.23 L21.22 15.54 A8.6 8.6 0 0 1 20.61 17.01 L22.34 19.19 L19.19 22.34 L17.01 20.61 A8.6 8.6 0 0 1 15.54 21.22 L15.23 23.98 L10.77 23.98 L10.46 21.22 A8.6 8.6 0 0 1 8.99 20.61 L6.81 22.34 L3.66 19.19 L5.39 17.01 A8.6 8.6 0 0 1 4.78 15.54 L2.02 15.23 L2.02 10.77 L4.78 10.46 A8.6 8.6 0 0 1 5.39 8.99 L3.66 6.81 L6.81 3.66 L8.99 5.39 A8.6 8.6 0 0 1 10.46 4.78 Z" fill="none" stroke="#e6f8ff" stroke-width="1.3" stroke-linejoin="round"/><circle cx="13" cy="13" r="3.7" fill="none" stroke="#e6f8ff" stroke-width="1.3"/></svg>
<svg class="a" style="left:1865px;top:156px;" width="22" height="22" viewBox="0 0 22 22"><path d="M9.5 3.3 H3.7 Q2.2 3.3 2.2 4.8 V19.2 Q2.2 20.7 3.7 20.7 H18.4 Q19.9 20.7 19.9 19.2 V13.7" fill="none" stroke="#e6f8ff" stroke-width="1.75" stroke-linecap="round"/><path d="M11 12.3 L19.9 3.4 M14.6 3.3 H19.9 V8.6" fill="none" stroke="#e6f8ff" stroke-width="1.75" stroke-linecap="round" stroke-linejoin="round"/></svg>
<div class="a" style="left:1568px;top:261px;width:328px;height:56px;background:#fde4cc;border-radius:5px;border:1px solid #f6d5b5;"></div>
<svg class="a" style="left:1577px;top:214px;" width="14" height="14" viewBox="0 0 14 14"><circle cx="7" cy="7" r="5.8" fill="none" stroke="#111" stroke-width="1.5"/><path d="M7 3.6 V7.2 H10" fill="none" stroke="#111" stroke-width="1.5"/></svg>
<div class="t" style="left:1598.5px;top:214.53px;font-size:14.49px;color:#0f1113;font-weight:bold;">09:00 - 09:50</div>
<div class="t" style="left:1691.6px;top:214.89px;font-size:14.07px;color:#0f1113;font-weight:bold;">Room : R101</div>
<div class="t" style="left:1598.5px;top:235.85px;font-size:12.93px;color:#16191c;-webkit-text-stroke:0.22px currentColor;">English</div>
<div class="t" style="left:1691.6px;top:235.77px;font-size:13.03px;color:#16191c;-webkit-text-stroke:0.22px currentColor;">John, Foster</div>
<svg class="a" style="left:1577px;top:271px;" width="14" height="14" viewBox="0 0 14 14"><circle cx="7" cy="7" r="5.8" fill="none" stroke="#111" stroke-width="1.5"/><path d="M7 3.6 V7.2 H10" fill="none" stroke="#111" stroke-width="1.5"/></svg>
<div class="t" style="left:1598.5px;top:271.13px;font-size:14.49px;color:#0f1113;font-weight:bold;">10:10 - 10:50</div>
<div class="t" style="left:1691.6px;top:271.49px;font-size:14.07px;color:#0f1113;font-weight:bold;">Room : R104</div>
<div class="t" style="left:1598.5px;top:292.53px;font-size:12.84px;color:#16191c;-webkit-text-stroke:0.22px currentColor;">H.Genetics</div>
<div class="t" style="left:1691.6px;top:292.61px;font-size:12.75px;color:#16191c;-webkit-text-stroke:0.22px currentColor;">Dawn, Paul</div>
<svg class="a" style="left:1577px;top:327px;" width="14" height="14" viewBox="0 0 14 14"><circle cx="7" cy="7" r="5.8" fill="none" stroke="#111" stroke-width="1.5"/><path d="M7 3.6 V7.2 H10" fill="none" stroke="#111" stroke-width="1.5"/></svg>
<div class="t" style="left:1598.5px;top:326.81px;font-size:14.76px;color:#0f1113;font-weight:bold;">11:00 - 11:50</div>
<div class="t" style="left:1691.6px;top:327.39px;font-size:14.07px;color:#0f1113;font-weight:bold;">Room : R105</div>
<div class="t" style="left:1598.5px;top:348.81px;font-size:12.39px;color:#16191c;-webkit-text-stroke:0.22px currentColor;">Music HIST</div>
<div class="t" style="left:1691.6px;top:347.91px;font-size:13.46px;color:#16191c;-webkit-text-stroke:0.22px currentColor;">Hamilton, Lweis</div>
<div class="a" style="left:395px;top:408.5px;width:1510px;height:651.5px;background:#fff;border-radius:5px;box-shadow:0 1px 2px rgba(40,60,80,.18);"></div>
<div class="a" style="left:395px;top:408.5px;width:1510px;height:61.5px;background:#efefef;border-radius:0px;border-radius:5px 5px 0 0;"></div>
<div class="a" style="left:395px;top:469.5px;width:1510px;height:1px;background:#cfcfcf;border-radius:0px;"></div>
<div class="a" style="left:395px;top:470.5px;width:1510px;height:59.5px;background:#e1e1e1;border-radius:0px;"></div>
<div class="t" style="left:416.8px;top:431.56px;font-size:17.88px;color:#0f1113;font-weight:bold;">Contacts</div>
<div class="a" style="left:513px;top:425px;width:1.2px;height:30px;background:#444;border-radius:0px;"></div>
<div class="t" style="left:534.5px;top:433.12px;font-size:15.22px;color:#2a333c;-webkit-text-stroke:0.22px currentColor;">Contacts Layout</div>
<div class="a" style="left:654.5px;top:420.5px;width:259px;height:39px;background:#fff;border-radius:4px;border:1px solid #8c8c8c;"></div>
<div class="t" style="left:669px;top:432.78px;font-size:15.62px;color:#16191c;-webkit-text-stroke:0.22px currentColor;">Default</div>
<div class="a" style="left:888px;top:437.5px;width:0px;height:0px;background:transparent;border-radius:0px;border-left:5px solid transparent;border-right:5px solid transparent;border-top:5px solid #111;"></div>
<div class="a" style="left:924px;top:420.5px;width:153px;height:39px;background:#0180a5;border-radius:4px;"></div>
<div class="t" style="left:943.4px;top:432.96px;font-size:15.41px;color:#e8f7fd;-webkit-text-stroke:0.22px currentColor;">View Options</div>
<svg class="a" style="left:1040px;top:431px;" width="18" height="18" viewBox="0 0 18 18"><circle cx="9" cy="9" r="7.6" fill="none" stroke="#fff" stroke-width="1.4"/><circle cx="5.6" cy="9" r="1" fill="#fff"/><circle cx="9" cy="9" r="1" fill="#fff"/><circle cx="12.4" cy="9" r="1" fill="#fff"/></svg>
<div class="a" style="left:1782px;top:421px;width:58px;height:40px;background:#0180a5;border-radius:4px;"></div>
<svg class="a" style="left:1789px;top:428px;" width="26" height="26" viewBox="-1 -1 28 28"><g transform="translate(13 13)"><path d="M-2.1 -11 H2.1 L2.7 -8.2 A8.4 8.4 0 0 1 5.2 -6.8 L7.9 -7.7 L10 -4.1 L7.9 -2.2 A8.4 8.4 0 0 1 7.9 2.2 L10 4.1 L7.9 7.7 L5.2 6.8 A8.4 8.4 0 0 1 2.7 8.2 L2.1 11 H-2.1 L-2.7 8.2 A8.4 8.4 0 0 1 -5.2 6.8 L-7.9 7.7 L-10 4.1 L-7.9 2.2 A8.4 8.4 0 0 1 -7.9 -2.2 L-10 -4.1 L-7.9 -7.7 L-5.2 -6.8 A8.4 8.4 0 0 1 -2.7 -8.2 Z" fill="none" stroke="#fff" stroke-width="1.4" stroke-linejoin="round"/><circle r="3.6" fill="none" stroke="#fff" stroke-width="1.4"/></g></svg>
<div class="a" style="left:1820px;top:437.5px;width:0px;height:0px;background:transparent;border-radius:0px;border-left:5px solid transparent;border-right:5px solid transparent;border-top:5px solid #fff;"></div>
<svg class="a" style="left:1859px;top:428px;" width="25" height="25" viewBox="0 0 22 22"><path d="M9.5 3.3 H3.7 Q2.2 3.3 2.2 4.8 V19.2 Q2.2 20.7 3.7 20.7 H18.4 Q19.9 20.7 19.9 19.2 V13.7" fill="none" stroke="#0180a5" stroke-width="1.75" stroke-linecap="round"/><path d="M11 12.3 L19.9 3.4 M14.6 3.3 H19.9 V8.6" fill="none" stroke="#0180a5" stroke-width="1.75" stroke-linecap="round" stroke-linejoin="round"/></svg>
<div class="t" style="left:416.8px;top:491.22px;font-size:15.1px;color:#2a333c;-webkit-text-stroke:0.22px currentColor;">Contact Full Name</div>
<div class="a" style="left:549px;top:480px;width:120px;height:40px;background:#0180a5;border-radius:4px;"></div>
<div class="t" style="left:569.5px;top:492.89px;font-size:14.9px;color:#dff5ff;-webkit-text-stroke:0.22px currentColor;">Begins With</div>
<div class="a" style="left:679px;top:480px;width:261px;height:40px;background:#fff;border-radius:3px;border:1px solid #bdbdbd;border-right:none;border-radius:3px 0 0 3px;"></div>
<div class="t" style="left:694.8px;top:493.48px;font-size:14.2px;color:#8b949c;-webkit-text-stroke:0.22px currentColor;">Search</div>
<svg class="a" style="left:911px;top:493px;" width="14" height="14" viewBox="0 0 14 14"><path d="M2.2 2.2 L11.8 11.8 M11.8 2.2 L2.2 11.8" stroke="#111" stroke-width="1.5"/></svg>
<div class="a" style="left:939.5px;top:480px;width:38.5px;height:40px;background:#0180a5;border-radius:0px;border-radius:0 4px 4px 0;"></div>
<svg class="a" style="left:948px;top:489px;" width="20" height="20" viewBox="0 0 20 20"><circle cx="9.3" cy="9.3" r="5.9" fill="none" stroke="#fff" stroke-width="1.7"/><path d="M13.6 13.6 L17 17" stroke="#fff" stroke-width="1.8" stroke-linecap="round"/></svg>
<div class="a" style="left:1587px;top:481px;width:108px;height:39.5px;background:#0a85ad;border-radius:4px;"></div>
<svg class="a" style="left:1604px;top:489px;" width="22" height="22" viewBox="0 0 22 22"><path d="M11 2.5 V15 M6.5 7 L11 2.5 L15.5 7" fill="none" stroke="#fff" stroke-width="1.6"/><path d="M2.5 12 V19.5 H19.5 V12" fill="none" stroke="#fff" stroke-width="1.6"/></svg>
<div class="t" style="left:1631.2px;top:494.61px;font-size:14.05px;color:#fff;font-weight:bold;">Export</div>
<div class="a" style="left:1704px;top:481px;width:180px;height:39.5px;background:#08698b;border-radius:4px;"></div>
<svg class="a" style="left:1722px;top:493px;" width="14" height="14" viewBox="0 0 14 14"><path d="M7 1 V13 M1 7 H13" stroke="#fff" stroke-width="1.5"/></svg>
<div class="t" style="left:1744.7px;top:494.38px;font-size:14.32px;color:#fff;font-weight:bold;">Add New Contact</div>
<div class="a" style="left:395px;top:530px;width:1510px;height:39.6px;background:#4a5c6e;border-radius:0px;"></div>
<div class="a" style="left:416px;top:542px;width:16px;height:16px;background:#fff;border-radius:1px;"></div>
<div class="a" style="left:483.1px;top:537.5px;width:1.5px;height:26px;background:#aab6c1;border-radius:0px;"></div>
<div class="a" style="left:738.4px;top:537.5px;width:1.5px;height:26px;background:#aab6c1;border-radius:0px;"></div>
<div class="a" style="left:879.7px;top:537.5px;width:1.5px;height:26px;background:#aab6c1;border-radius:0px;"></div>
<div class="a" style="left:1021.4px;top:537.5px;width:1.5px;height:26px;background:#aab6c1;border-radius:0px;"></div>
<div class="a" style="left:1157.5px;top:537.5px;width:1.5px;height:26px;background:#aab6c1;border-radius:0px;"></div>
<div class="a" style="left:1245.4px;top:537.5px;width:1.5px;height:26px;background:#aab6c1;border-radius:0px;"></div>
<div class="a" style="left:1340.5px;top:537.5px;width:1.5px;height:26px;background:#aab6c1;border-radius:0px;"></div>
<div class="a" style="left:1411.5px;top:537.5px;width:1.5px;height:26px;background:#aab6c1;border-radius:0px;"></div>
<div class="a" style="left:1553px;top:537.5px;width:1.5px;height:26px;background:#aab6c1;border-radius:0px;"></div>
<div class="a" style="left:1685.4px;top:537.5px;width:1.5px;height:26px;background:#aab6c1;border-radius:0px;"></div>
<svg class="a" style="left:493px;top:545px;" width="12" height="11" viewBox="0 0 12 11"><path d="M0.5 1 H11.5 M2.5 5 H9.5 M4.8 9 H7.2" stroke="#eef2f5" stroke-width="1.7"/></svg>
<div class="t" style="left:515.4px;top:542.64px;font-size:14.6px;color:#f2f5f8;font-weight:bold;letter-spacing:-0.035px;">Contact Full Name</div>
<svg class="a" style="left:748px;top:545px;" width="12" height="11" viewBox="0 0 12 11"><path d="M0.5 1 H11.5 M2.5 5 H9.5 M4.8 9 H7.2" stroke="#eef2f5" stroke-width="1.7"/></svg>
<div class="t" style="left:770.4px;top:542.64px;font-size:14.6px;color:#f2f5f8;font-weight:bold;letter-spacing:-0.105px;">Last Name</div>
<svg class="a" style="left:889px;top:545px;" width="12" height="11" viewBox="0 0 12 11"><path d="M0.5 1 H11.5 M2.5 5 H9.5 M4.8 9 H7.2" stroke="#eef2f5" stroke-width="1.7"/></svg>
<div class="t" style="left:911px;top:542.64px;font-size:14.6px;color:#f2f5f8;font-weight:bold;letter-spacing:-0.029px;">First Name</div>
<svg class="a" style="left:1030px;top:545px;" width="12" height="11" viewBox="0 0 12 11"><path d="M0.5 1 H11.5 M2.5 5 H9.5 M4.8 9 H7.2" stroke="#eef2f5" stroke-width="1.7"/></svg>
<div class="t" style="left:1052.3px;top:542.64px;font-size:14.6px;color:#f2f5f8;font-weight:bold;letter-spacing:0.095px;">Middle Name</div>
<svg class="a" style="left:1168px;top:545px;" width="12" height="11" viewBox="0 0 12 11"><path d="M0.5 1 H11.5 M2.5 5 H9.5 M4.8 9 H7.2" stroke="#eef2f5" stroke-width="1.7"/></svg>
<div class="t" style="left:1189.6px;top:542.64px;font-size:14.6px;color:#f2f5f8;font-weight:bold;letter-spacing:-0.271px;">Suffix</div>
<svg class="a" style="left:1256px;top:545px;" width="12" height="11" viewBox="0 0 12 11"><path d="M0.5 1 H11.5 M2.5 5 H9.5 M4.8 9 H7.2" stroke="#eef2f5" stroke-width="1.7"/></svg>
<div class="t" style="left:1277.5px;top:542.64px;font-size:14.6px;color:#f2f5f8;font-weight:bold;letter-spacing:-0.397px;">Line 1</div>
<svg class="a" style="left:1350px;top:545px;" width="12" height="11" viewBox="0 0 12 11"><path d="M0.5 1 H11.5 M2.5 5 H9.5 M4.8 9 H7.2" stroke="#eef2f5" stroke-width="1.7"/></svg>
<div class="t" style="left:1371.9px;top:542.64px;font-size:14.6px;color:#f2f5f8;font-weight:bold;letter-spacing:0.005px;">Zip</div>
<svg class="a" style="left:1421px;top:545px;" width="12" height="11" viewBox="0 0 12 11"><path d="M0.5 1 H11.5 M2.5 5 H9.5 M4.8 9 H7.2" stroke="#eef2f5" stroke-width="1.7"/></svg>
<div class="t" style="left:1443.3px;top:542.64px;font-size:14.6px;color:#f2f5f8;font-weight:bold;letter-spacing:-0.025px;">Home Phone</div>
<svg class="a" style="left:1562px;top:545px;" width="12" height="11" viewBox="0 0 12 11"><path d="M0.5 1 H11.5 M2.5 5 H9.5 M4.8 9 H7.2" stroke="#eef2f5" stroke-width="1.7"/></svg>
<div class="t" style="left:1584.3px;top:542.64px;font-size:14.6px;color:#f2f5f8;font-weight:bold;letter-spacing:-0.158px;">Office Phone</div>
<svg class="a" style="left:1695px;top:545px;" width="12" height="11" viewBox="0 0 12 11"><path d="M0.5 1 H11.5 M2.5 5 H9.5 M4.8 9 H7.2" stroke="#eef2f5" stroke-width="1.7"/></svg>
<div class="t" style="left:1716.7px;top:542.64px;font-size:14.6px;color:#f2f5f8;font-weight:bold;letter-spacing:-0.22px;">Office Extension</div>
<svg class="a" style="left:652px;top:543px;" width="12" height="14" viewBox="0 0 12 14"><path d="M6 1 V12.5 M1.5 8 L6 12.5 L10.5 8" fill="none" stroke="#eef2f5" stroke-width="1.5"/></svg>
<div class="a" style="left:395px;top:570.0px;width:1510px;height:40.12px;background:#e6eef6;border-radius:0px;"></div>
<div class="a" style="left:395px;top:609.12px;width:1510px;height:1px;background:#cfdbe6;border-radius:0px;"></div>
<svg class="a" style="left:447px;top:579px;" width="22" height="22" viewBox="0 0 22 22"><circle cx="11" cy="11" r="9.6" fill="none" stroke="#111" stroke-width="1.8"/><circle cx="6.8" cy="11" r="1.4" fill="#111"/><circle cx="11" cy="11" r="1.4" fill="#111"/><circle cx="15.2" cy="11" r="1.4" fill="#111"/></svg>
<div class="t" style="left:516.5px;top:582.25px;font-size:15.3px;color:#16191c;-webkit-text-stroke:0.22px currentColor;letter-spacing:-0.25px;">Mrs. Elaine Abbott</div>
<svg class="a" style="left:704px;top:580px;" width="21" height="21" viewBox="0 0 21 21"><path d="M8.5 2 H1.5 V19 H18.5 V12" fill="none" stroke="#111" stroke-width="2"/><path d="M9 11 L18 2 M11.5 1.5 H18.5 V8.5" fill="none" stroke="#111" stroke-width="2"/></svg>
<div class="t" style="left:770.8px;top:582.25px;font-size:15.3px;color:#16191c;-webkit-text-stroke:0.22px currentColor;letter-spacing:-0.25px;">Elaine</div>
<div class="t" style="left:911.4px;top:582.25px;font-size:15.3px;color:#16191c;-webkit-text-stroke:0.22px currentColor;letter-spacing:-0.25px;">Abbott</div>
<div class="t" style="left:1189.6px;top:582.25px;font-size:15.3px;color:#16191c;-webkit-text-stroke:0.22px currentColor;letter-spacing:-0.25px;">Mrs.</div>
<div class="t" style="left:1443.3px;top:582.83px;font-size:14.61px;color:#16191c;-webkit-text-stroke:0.22px currentColor;">413-566-3463</div>
<div class="a" style="left:395px;top:610.12px;width:1510px;height:40.12px;background:#f4f8fb;border-radius:0px;"></div>
<div class="a" style="left:395px;top:649.24px;width:1510px;height:1px;background:#cfdbe6;border-radius:0px;"></div>
<svg class="a" style="left:447px;top:619px;" width="22" height="22" viewBox="0 0 22 22"><circle cx="11" cy="11" r="9.6" fill="none" stroke="#111" stroke-width="1.8"/><circle cx="6.8" cy="11" r="1.4" fill="#111"/><circle cx="11" cy="11" r="1.4" fill="#111"/><circle cx="15.2" cy="11" r="1.4" fill="#111"/></svg>
<div class="t" style="left:516.5px;top:622.37px;font-size:15.3px;color:#16191c;-webkit-text-stroke:0.22px currentColor;letter-spacing:-0.25px;">Mr. Cliff Abbott</div>
<svg class="a" style="left:704px;top:620px;" width="21" height="21" viewBox="0 0 21 21"><path d="M8.5 2 H1.5 V19 H18.5 V12" fill="none" stroke="#111" stroke-width="2"/><path d="M9 11 L18 2 M11.5 1.5 H18.5 V8.5" fill="none" stroke="#111" stroke-width="2"/></svg>
<div class="t" style="left:770.8px;top:622.37px;font-size:15.3px;color:#16191c;-webkit-text-stroke:0.22px currentColor;letter-spacing:-0.25px;">Cliff</div>
<div class="t" style="left:911.4px;top:622.37px;font-size:15.3px;color:#16191c;-webkit-text-stroke:0.22px currentColor;letter-spacing:-0.25px;">Abbott</div>
<div class="t" style="left:1189.6px;top:622.37px;font-size:15.3px;color:#16191c;-webkit-text-stroke:0.22px currentColor;letter-spacing:-0.25px;">Mr.</div>
<div class="t" style="left:1443.3px;top:622.95px;font-size:14.61px;color:#16191c;-webkit-text-stroke:0.22px currentColor;">413-566-3463</div>
<div class="a" style="left:395px;top:650.24px;width:1510px;height:40.12px;background:#e6eef6;border-radius:0px;"></div>
<div class="a" style="left:395px;top:689.36px;width:1510px;height:1px;background:#cfdbe6;border-radius:0px;"></div>
<svg class="a" style="left:447px;top:659px;" width="22" height="22" viewBox="0 0 22 22"><circle cx="11" cy="11" r="9.6" fill="none" stroke="#111" stroke-width="1.8"/><circle cx="6.8" cy="11" r="1.4" fill="#111"/><circle cx="11" cy="11" r="1.4" fill="#111"/><circle cx="15.2" cy="11" r="1.4" fill="#111"/></svg>
<div class="t" style="left:516.5px;top:662.49px;font-size:15.3px;color:#16191c;-webkit-text-stroke:0.22px currentColor;letter-spacing:-0.25px;">Mr. John Samuel Appleton</div>
<svg class="a" style="left:704px;top:660px;" width="21" height="21" viewBox="0 0 21 21"><path d="M8.5 2 H1.5 V19 H18.5 V12" fill="none" stroke="#111" stroke-width="2"/><path d="M9 11 L18 2 M11.5 1.5 H18.5 V8.5" fill="none" stroke="#111" stroke-width="2"/></svg>
<div class="t" style="left:770.8px;top:662.49px;font-size:15.3px;color:#16191c;-webkit-text-stroke:0.22px currentColor;letter-spacing:-0.25px;">John</div>
<div class="t" style="left:911.4px;top:662.49px;font-size:15.3px;color:#16191c;-webkit-text-stroke:0.22px currentColor;letter-spacing:-0.25px;">Appleton</div>
<div class="t" style="left:1189.6px;top:662.49px;font-size:15.3px;color:#16191c;-webkit-text-stroke:0.22px currentColor;letter-spacing:-0.25px;">Mr.</div>
<div class="t" style="left:1443.3px;top:663.07px;font-size:14.61px;color:#16191c;-webkit-text-stroke:0.22px currentColor;">413-566-3463</div>
<div class="a" style="left:395px;top:690.36px;width:1510px;height:40.12px;background:#f4f8fb;border-radius:0px;"></div>
<div class="a" style="left:395px;top:729.48px;width:1510px;height:1px;background:#cfdbe6;border-radius:0px;"></div>
<svg class="a" style="left:447px;top:699px;" width="22" height="22" viewBox="0 0 22 22"><circle cx="11" cy="11" r="9.6" fill="none" stroke="#111" stroke-width="1.8"/><circle cx="6.8" cy="11" r="1.4" fill="#111"/><circle cx="11" cy="11" r="1.4" fill="#111"/><circle cx="15.2" cy="11" r="1.4" fill="#111"/></svg>
<div class="t" style="left:516.5px;top:702.61px;font-size:15.3px;color:#16191c;-webkit-text-stroke:0.22px currentColor;letter-spacing:-0.25px;">Mr. James Samuel</div>
<svg class="a" style="left:704px;top:700px;" width="21" height="21" viewBox="0 0 21 21"><path d="M8.5 2 H1.5 V19 H18.5 V12" fill="none" stroke="#111" stroke-width="2"/><path d="M9 11 L18 2 M11.5 1.5 H18.5 V8.5" fill="none" stroke="#111" stroke-width="2"/></svg>
<div class="t" style="left:770.8px;top:702.61px;font-size:15.3px;color:#16191c;-webkit-text-stroke:0.22px currentColor;letter-spacing:-0.25px;">James</div>
<div class="t" style="left:911.4px;top:702.61px;font-size:15.3px;color:#16191c;-webkit-text-stroke:0.22px currentColor;letter-spacing:-0.25px;">Samuel</div>
<div class="t" style="left:1189.6px;top:702.61px;font-size:15.3px;color:#16191c;-webkit-text-stroke:0.22px currentColor;letter-spacing:-0.25px;">Mr.</div>
<div class="t" style="left:1443.3px;top:703.19px;font-size:14.61px;color:#16191c;-webkit-text-stroke:0.22px currentColor;">413-566-3463</div>
<div class="a" style="left:395px;top:730.48px;width:1510px;height:40.12px;background:#e6eef6;border-radius:0px;"></div>
<div class="a" style="left:395px;top:769.6px;width:1510px;height:1px;background:#cfdbe6;border-radius:0px;"></div>
<svg class="a" style="left:447px;top:739px;" width="22" height="22" viewBox="0 0 22 22"><circle cx="11" cy="11" r="9.6" fill="none" stroke="#111" stroke-width="1.8"/><circle cx="6.8" cy="11" r="1.4" fill="#111"/><circle cx="11" cy="11" r="1.4" fill="#111"/><circle cx="15.2" cy="11" r="1.4" fill="#111"/></svg>
<div class="t" style="left:516.5px;top:742.73px;font-size:15.3px;color:#16191c;-webkit-text-stroke:0.22px currentColor;letter-spacing:-0.25px;">Mr. Richard Rediker</div>
<svg class="a" style="left:704px;top:740px;" width="21" height="21" viewBox="0 0 21 21"><path d="M8.5 2 H1.5 V19 H18.5 V12" fill="none" stroke="#111" stroke-width="2"/><path d="M9 11 L18 2 M11.5 1.5 H18.5 V8.5" fill="none" stroke="#111" stroke-width="2"/></svg>
<div class="t" style="left:770.8px;top:742.73px;font-size:15.3px;color:#16191c;-webkit-text-stroke:0.22px currentColor;letter-spacing:-0.25px;">Richard</div>
<div class="t" style="left:911.4px;top:742.73px;font-size:15.3px;color:#16191c;-webkit-text-stroke:0.22px currentColor;letter-spacing:-0.25px;">Rediker</div>
<div class="t" style="left:1189.6px;top:742.73px;font-size:15.3px;color:#16191c;-webkit-text-stroke:0.22px currentColor;letter-spacing:-0.25px;">Mr.</div>
<div class="t" style="left:1443.3px;top:743.31px;font-size:14.61px;color:#16191c;-webkit-text-stroke:0.22px currentColor;">413-566-3463</div>
<div class="a" style="left:395px;top:770.6px;width:1510px;height:40.12px;background:#f4f8fb;border-radius:0px;"></div>
<div class="a" style="left:395px;top:809.72px;width:1510px;height:1px;background:#cfdbe6;border-radius:0px;"></div>
<svg class="a" style="left:447px;top:779px;" width="22" height="22" viewBox="0 0 22 22"><circle cx="11" cy="11" r="9.6" fill="none" stroke="#111" stroke-width="1.8"/><circle cx="6.8" cy="11" r="1.4" fill="#111"/><circle cx="11" cy="11" r="1.4" fill="#111"/><circle cx="15.2" cy="11" r="1.4" fill="#111"/></svg>
<div class="t" style="left:516.5px;top:782.85px;font-size:15.3px;color:#16191c;-webkit-text-stroke:0.22px currentColor;letter-spacing:-0.25px;">Miss. Gayle Rediker</div>
<svg class="a" style="left:704px;top:781px;" width="21" height="21" viewBox="0 0 21 21"><path d="M8.5 2 H1.5 V19 H18.5 V12" fill="none" stroke="#111" stroke-width="2"/><path d="M9 11 L18 2 M11.5 1.5 H18.5 V8.5" fill="none" stroke="#111" stroke-width="2"/></svg>
<div class="t" style="left:770.8px;top:782.85px;font-size:15.3px;color:#16191c;-webkit-text-stroke:0.22px currentColor;letter-spacing:-0.25px;">Gayle</div>
<div class="t" style="left:911.4px;top:782.85px;font-size:15.3px;color:#16191c;-webkit-text-stroke:0.22px currentColor;letter-spacing:-0.25px;">Rediker</div>
<div class="t" style="left:1189.6px;top:782.85px;font-size:15.3px;color:#16191c;-webkit-text-stroke:0.22px currentColor;letter-spacing:-0.25px;">Mrs.</div>
<div class="t" style="left:1443.3px;top:783.43px;font-size:14.61px;color:#16191c;-webkit-text-stroke:0.22px currentColor;">413-566-3463</div>
<div class="a" style="left:395px;top:810.72px;width:1510px;height:41.5px;background:#e6eef6;border-radius:0px;"></div>
<svg class="a" style="left:447px;top:819px;" width="22" height="22" viewBox="0 0 22 22"><circle cx="11" cy="11" r="9.6" fill="none" stroke="#111" stroke-width="1.8"/><circle cx="6.8" cy="11" r="1.4" fill="#111"/><circle cx="11" cy="11" r="1.4" fill="#111"/><circle cx="15.2" cy="11" r="1.4" fill="#111"/></svg>
<div class="t" style="left:516.5px;top:822.97px;font-size:15.3px;color:#16191c;-webkit-text-stroke:0.22px currentColor;letter-spacing:-0.25px;">Mr. John Schreck</div>
<svg class="a" style="left:704px;top:821px;" width="21" height="21" viewBox="0 0 21 21"><path d="M8.5 2 H1.5 V19 H18.5 V12" fill="none" stroke="#111" stroke-width="2"/><path d="M9 11 L18 2 M11.5 1.5 H18.5 V8.5" fill="none" stroke="#111" stroke-width="2"/></svg>
<div class="t" style="left:770.8px;top:822.97px;font-size:15.3px;color:#16191c;-webkit-text-stroke:0.22px currentColor;letter-spacing:-0.25px;">John</div>
<div class="t" style="left:911.4px;top:822.97px;font-size:15.3px;color:#16191c;-webkit-text-stroke:0.22px currentColor;letter-spacing:-0.25px;">Schreck</div>
<div class="t" style="left:1189.6px;top:822.97px;font-size:15.3px;color:#16191c;-webkit-text-stroke:0.22px currentColor;letter-spacing:-0.25px;">Mr.</div>
<div class="t" style="left:1443.3px;top:823.55px;font-size:14.61px;color:#16191c;-webkit-text-stroke:0.22px currentColor;">413-566-3463</div>
<div class="a" style="left:483px;top:570px;width:1px;height:281px;background:#c5d3df;border-radius:0px;"></div>
<div class="a" style="left:395px;top:851.5px;width:1510px;height:16px;background:#efefef;border-radius:0px;"></div>
<div class="a" style="left:414.5px;top:855.3px;width:501px;height:7.5px;background:#c2c2c2;border-radius:4px;"></div>
</body></html>
